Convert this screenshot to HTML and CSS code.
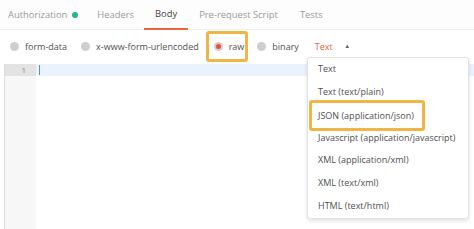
FILE: index.html
```html
<!DOCTYPE html>
<html lang="en">
<head>
  <meta charset="UTF-8" />
  <title>Request Body</title>
  <link rel="stylesheet" href="styles.css">
</head>
<body>
  <div class="tabs">
    <div class="tab">Authorization <span class="dot"></span></div>
    <div class="tab">Headers</div>
    <div class="tab active">Body</div>
    <div class="tab">Pre-request Script</div>
    <div class="tab">Tests</div>
  </div>

  <div class="modes">
    <div class="mode"><span class="radio"></span>form-data</div>
    <div class="mode"><span class="radio"></span>x-www-form-urlencoded</div>
    <div class="mode mark selected"><span class="radio"></span>raw</div>
    <div class="mode"><span class="radio"></span>binary</div>
    <div class="type-pick">Text <span class="caret">▲</span></div>
  </div>

  <div class="editor">
    <div class="gutter">
      <div class="line-no">1</div>
    </div>
    <div class="code">
      <div class="line current"><span class="cursor"></span></div>
    </div>
  </div>

  <ul class="menu">
    <li>Text</li>
    <li>Text (text/plain)</li>
    <li class="mark">JSON (application/json)</li>
    <li>Javascript (application/javascript)</li>
    <li>XML (application/xml)</li>
    <li>XML (text/xml)</li>
    <li>HTML (text/html)</li>
  </ul>
</body>
</html>
```

FILE: styles.css
```css
body {
  margin: 0;
  font-family: "Open Sans", sans-serif;
  font-size: 9px;
  color: #555;
  background: #fff;
  width: 474px;
  height: 229px;
  overflow: hidden;
  position: relative;
}

.tabs {
  display: flex;
  height: 29px;
  border-bottom: 1px solid #f0f0f0;
  background: #fdfdfd;
  font-size: 9.4px;
}

.tab {
  padding: 0 11px;
  line-height: 30px;
  color: #9a9a9a;
  display: flex;
  align-items: center;
  gap: 5px;
}

.tab:first-child {
  padding: 0 8px;
}

.tab.active {
  color: #444;
  border-bottom: 2px solid #e8663d;
  height: 28px;
  margin-left: -1px;
}

.dot {
  width: 6px;
  height: 6px;
  border-radius: 50%;
  background: #26b47f;
}

.modes {
  display: flex;
  align-items: center;
  height: 33px;
  padding-left: 10px;
}

.mode {
  display: flex;
  align-items: center;
  gap: 6px;
  margin-right: 14px;
  color: #505050;
}

.mode.mark {
  height: 29px;
  padding: 0 3px 0 7px;
  margin: 0 10px 0 -6px;
}

.radio {
  width: 9px;
  height: 9px;
  border-radius: 50%;
  background: #cfcfcf;
  display: inline-block;
  position: relative;
}

.selected .radio::after {
  content: "";
  position: absolute;
  left: 2px;
  top: 2px;
  width: 5px;
  height: 5px;
  border-radius: 50%;
  background: #f04a3a;
}

.mark {
  outline: 3px solid #f0b547;
  outline-offset: -2px;
  border-radius: 2px;
}

.type-pick {
  color: #e8663d;
  margin-left: 2px;
}

.caret {
  color: #666;
  font-size: 6px;
  margin-left: 9px;
  vertical-align: 2px;
}

.editor {
  display: flex;
  height: 166px;
  margin-top: 1px;
  margin-left: 4px;
  border-left: 1px solid #ddd;
}

.gutter {
  width: 31px;
  background: #f7f7f7;
}

.line-no {
  height: 12px;
  line-height: 12px;
  background: #e3e3e3;
  text-align: right;
  padding-right: 10px;
  font-size: 8px;
  color: #888;
}

.code {
  flex: 1;
}

.line.current {
  height: 12px;
  background: #e9f2fd;
  display: flex;
  align-items: center;
  padding-left: 3px;
}

.cursor {
  width: 1px;
  height: 10px;
  background: #6b8bb0;
}

.menu {
  position: absolute;
  left: 307px;
  top: 57px;
  width: 160px;
  height: 160px;
  margin: 0;
  padding: 0;
  list-style: none;
  background: #fff;
  border: 1px solid #e2e2e2;
  border-radius: 3px;
  box-shadow: 0 2px 4px rgba(0, 0, 0, 0.12);
}

.menu li {
  height: 22.8px;
  line-height: 22.8px;
  padding-left: 10px;
  color: #505050;
  white-space: nowrap;
}

.menu li.mark {
  width: 106px;
  height: 29px;
  line-height: 29px;
  margin: -3px 0 -3px 2px;
  padding-left: 8px;
}
```
